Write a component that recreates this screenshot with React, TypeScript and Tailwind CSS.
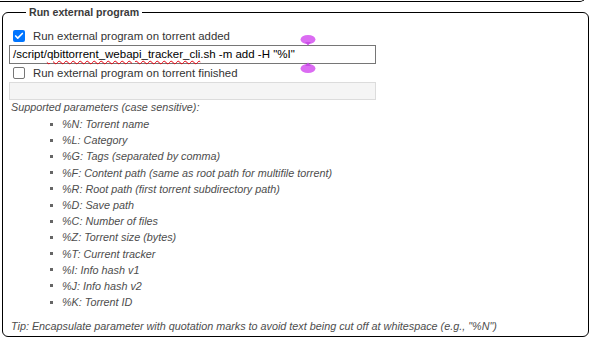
import { Check } from 'lucide-react';

const params = [
  '%N: Torrent name',
  '%L: Category',
  '%G: Tags (separated by comma)',
  '%F: Content path (same as root path for multifile torrent)',
  '%R: Root path (first torrent subdirectory path)',
  '%D: Save path',
  '%C: Number of files',
  '%Z: Torrent size (bytes)',
  '%T: Current tracker',
  '%I: Info hash v1',
  '%J: Info hash v2',
  '%K: Torrent ID',
];

function Handle({ flip }: { flip?: boolean }) {
  return (
    <svg width="16" height="11" viewBox="0 0 16 11" className={flip ? 'rotate-180' : ''}>
      <ellipse cx="8" cy="4.5" rx="7.5" ry="4.5" fill="#db6cf2" />
      <path d="M5 7 L8 10.5 L11 7 Z" fill="#c94de6" />
    </svg>
  );
}

export default function App() {
  return (
    <div className="relative w-[589px] h-[340px] overflow-hidden bg-white text-[#333] font-['Liberation_Sans',Arial,sans-serif]">
      {/* bottom edge of the previous fieldset */}
      <div className="-mt-[4px] mr-[4px] h-[6px] border-b border-r border-black rounded-br-[5px]" />

      <fieldset className="ml-[2px] mt-[2px] border border-black rounded-[6px] pl-[6px] pr-[10px] pt-0 pb-[3px]">
        <legend className="ml-[17px] px-[3px] text-[10.6px] font-bold leading-[16px] text-[#3a3a3a]">
          Run external program
        </legend>

        {/* on torrent added */}
        <label className="mt-[8px] flex items-center gap-[8px] pl-[4px] text-[11.4px] leading-[16px]">
          <span className="flex w-[12px] h-[12px] items-center justify-center rounded-[2px] bg-[#0075ff]">
            <Check className="w-[10px] h-[10px] text-white" strokeWidth={4} />
          </span>
          Run external program on torrent added
        </label>
        <div className="relative mt-[1px] w-[367px] h-[19px] border border-[#767676] bg-white flex items-center px-[3px] text-[11.5px] text-black whitespace-nowrap">
          <span>/script/</span>
          <span className="underline decoration-wavy decoration-red-600 decoration-[1px] underline-offset-[2px]">qbittorrent_webapi_tracker_cli</span>
          <span>.sh -m add -H "%I"</span>
          <span className="absolute left-[290px] -top-[11px] flex">
            <Handle />
          </span>
          <span className="absolute left-[290px] -bottom-[10px] flex">
            <Handle flip />
          </span>
        </div>

        {/* on torrent finished */}
        <label className="mt-[1px] flex items-center gap-[8px] pl-[4px] text-[11.4px] leading-[16px]">
          <span className="w-[12px] h-[12px] rounded-[2px] border border-[#767676] bg-white" />
          Run external program on torrent finished
        </label>
        <div className="mt-[1px] w-[367px] h-[18px] border border-[#dcdcdc] bg-[#f5f5f5]" />

        <div className="pl-[2px] text-[10.8px] italic text-[#4d4d4d] leading-[14px]">
          Supported parameters (case sensitive):
        </div>
        <ul className="mt-[2px] pl-[41px] text-[10.8px] italic text-[#4d4d4d]">
          {params.map((p) => (
            <li key={p} className="flex items-center h-[16.2px]">
              <span className="w-[3px] h-[3px] bg-[#666] mr-[9px]" />
              {p}
            </li>
          ))}
        </ul>
        <div className="mt-[9px] pl-[2px] text-[10.8px] italic text-[#4d4d4d] leading-[14px]">
          Tip: Encapsulate parameter with quotation marks to avoid text being cut off at whitespace (e.g., "%N")
        </div>
      </fieldset>
    </div>
  );
}
